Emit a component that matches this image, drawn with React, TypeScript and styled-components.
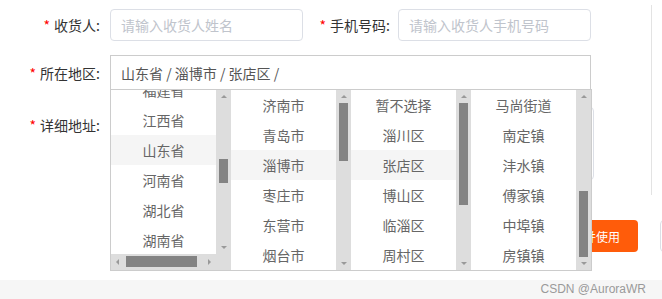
import React from "react";
import styled, { createGlobalStyle } from "styled-components";

const GlobalStyle = createGlobalStyle`
  html, body {
    margin: 0;
    padding: 0;
    background: #fff;
  }
  body {
    font-family: "Noto Sans CJK SC", "Noto Sans", sans-serif;
    font-size: 14px;
    color: #333;
  }
`;

const Page = styled.div`
  width: 662px;
  height: 299px;
  overflow: hidden;
  display: flex;
  flex-direction: column;
  background: #fff;
`;

const Main = styled.div`
  flex: 1;
  padding-top: 9px;
`;

const TopSection = styled.div`
  display: flex;
`;

const Fields = styled.div`
  width: 651px;
  flex: none;
`;

const Divider = styled.div`
  flex: none;
  width: 1px;
  height: 190px;
  margin-top: -4px;
  background: #e3e3e3;
`;

const Row = styled.div<{ $top?: number; $start?: boolean }>`
  display: flex;
  align-items: ${({ $start }) => ($start ? "flex-start" : "center")};
  margin-top: ${({ $top }) => $top ?? 0}px;
`;

const Label = styled.label<{ $width: number; $left?: number; $gap: number; $top?: number }>`
  flex: none;
  width: ${({ $width }) => $width}px;
  margin-left: ${({ $left }) => $left ?? 0}px;
  margin-right: ${({ $gap }) => $gap}px;
  margin-top: ${({ $top }) => $top ?? 0}px;
  text-align: right;
  line-height: 20px;
  white-space: nowrap;
  color: #333;
`;

const Req = styled.span`
  color: #f00;
  margin-right: 4px;
`;

const TextInput = styled.input`
  box-sizing: border-box;
  width: 193px;
  height: 32px;
  padding: 0 10px;
  border: 1px solid #dcdfe6;
  border-radius: 4px;
  font: inherit;
  font-size: 14px;
  color: #333;
  outline: none;

  &::placeholder {
    color: #c0c4cc;
  }
`;

const AddressField = styled.div`
  position: relative;
  box-sizing: border-box;
  width: 481px;
  height: 35px;
  padding: 0 10px;
  border: 1px solid #cccccc;
  display: flex;
  align-items: center;
  color: #555;
`;

const Dropdown = styled.div`
  position: absolute;
  top: 100%;
  left: -1px;
  z-index: 10;
  display: flex;
  height: 180px;
  border: 1px solid #cccccc;
  background: #fff;
`;

const Column = styled.div`
  width: 120px;
  display: flex;
  flex-direction: column;
`;

const ColumnBody = styled.div`
  flex: 1;
  min-height: 0;
  display: flex;
`;

const List = styled.ul`
  flex: 1;
  margin: 0;
  padding: 0;
  list-style: none;
  overflow: hidden;
`;

const Item = styled.li<{ $active?: boolean; $shift?: number }>`
  height: 30px;
  margin-top: ${({ $shift }) => $shift ?? 0}px;
  line-height: 30px;
  text-align: center;
  white-space: nowrap;
  color: #666;
  background: ${({ $active }) => ($active ? "#f5f5f5" : "transparent")};
`;

const VTrack = styled.div`
  flex: none;
  width: 15px;
  display: flex;
  flex-direction: column;
  background: #dddddd;
`;

const HTrack = styled.div`
  flex: none;
  height: 16px;
  display: flex;
  background: #dddddd;
`;

const ArrowBox = styled.div`
  flex: none;
  width: 13px;
  height: 13px;
  display: flex;
  align-items: center;
  justify-content: center;
`;

const VArrowBox = styled(ArrowBox)`
  width: auto;
`;

const HArrowBox = styled(ArrowBox)`
  height: auto;
`;

const Triangle = styled.span<{ $dir: "up" | "down" | "left" | "right" }>`
  width: 0;
  height: 0;
  border-style: solid;
  border-color: transparent;
  ${({ $dir }) =>
    $dir === "up"
      ? "border-width: 0 3px 3px 3px; border-bottom-color: #999;"
      : $dir === "down"
      ? "border-width: 3px 3px 0 3px; border-top-color: #999;"
      : $dir === "left"
      ? "border-width: 3px 3px 3px 0; border-right-color: #999;"
      : "border-width: 3px 0 3px 3px; border-left-color: #999;"}
`;

const Rail = styled.div`
  flex: 1;
  min-width: 0;
  min-height: 0;
  display: flex;
`;

const VRail = styled(Rail)`
  flex-direction: column;
`;

const VThumb = styled.div<{ $offset: number; $size: number }>`
  flex: none;
  margin: ${({ $offset }) => $offset}px 3px 0 3px;
  height: ${({ $size }) => $size}px;
  background: #838383;
`;

const HThumb = styled.div<{ $offset: number; $size: number }>`
  flex: none;
  margin: 2px 0 3px ${({ $offset }) => $offset}px;
  width: ${({ $size }) => $size}px;
  background: #838383;
`;

const Corner = styled.div`
  flex: none;
  width: 15px;
`;

const TextArea = styled.textarea`
  box-sizing: border-box;
  width: 484px;
  height: 73px;
  border: 1px solid #dcdfe6;
  border-radius: 4px;
  resize: none;
  font: inherit;
  outline: none;
`;

const ButtonRow = styled.div`
  display: flex;
  gap: 22px;
  margin-top: 25px;
  padding-left: 542px;
`;

const PrimaryButton = styled.button`
  flex: none;
  height: 32px;
  padding: 0 18px;
  border: none;
  border-radius: 4px;
  background: #ff5c0a;
  color: #fff;
  font: inherit;
  font-size: 12px;
`;

const GhostButton = styled.button`
  flex: none;
  height: 32px;
  padding: 0 18px;
  border: 1px solid #dcdfe6;
  border-radius: 4px;
  background: #fff;
  color: #333;
  font: inherit;
  font-size: 12px;
`;

const Footer = styled.div`
  flex: none;
  height: 19px;
  box-sizing: border-box;
  padding: 2px 16px 0 0;
  background: #f6f6f6;
  text-align: right;
  font-family: "Liberation Sans", Arial, sans-serif;
  font-size: 12px;
  line-height: 14px;
  color: #9a9a9a;
`;

type ColumnData = {
  items: string[];
  active?: string;
  shift?: number;
  thumb: [number, number];
  hThumb?: [number, number];
};

const columns: ColumnData[] = [
  {
    items: ["福建省", "江西省", "山东省", "河南省", "湖北省", "湖南省"],
    active: "山东省",
    shift: -15,
    thumb: [56, 24],
    hThumb: [2, 71],
  },
  {
    items: ["济南市", "青岛市", "淄博市", "枣庄市", "东营市", "烟台市"],
    active: "淄博市",
    thumb: [0, 58],
  },
  {
    items: ["暂不选择", "淄川区", "张店区", "博山区", "临淄区", "周村区"],
    active: "张店区",
    thumb: [0, 102],
  },
  {
    items: ["马尚街道", "南定镇", "沣水镇", "傅家镇", "中埠镇", "房镇镇"],
    thumb: [88, 66],
  },
];

const VScroll = ({ offset, size }: { offset: number; size: number }) => (
  <VTrack>
    <VArrowBox>
      <Triangle $dir="up" />
    </VArrowBox>
    <VRail>
      <VThumb $offset={offset} $size={size} />
    </VRail>
    <VArrowBox>
      <Triangle $dir="down" />
    </VArrowBox>
  </VTrack>
);

const HScroll = ({ offset, size }: { offset: number; size: number }) => (
  <HTrack>
    <HArrowBox>
      <Triangle $dir="left" />
    </HArrowBox>
    <Rail>
      <HThumb $offset={offset} $size={size} />
    </Rail>
    <HArrowBox>
      <Triangle $dir="right" />
    </HArrowBox>
    <Corner />
  </HTrack>
);

const RegionColumn = ({ data }: { data: ColumnData }) => (
  <Column>
    <ColumnBody>
      <List>
        {data.items.map((name, i) => (
          <Item key={name} $active={name === data.active} $shift={i === 0 ? data.shift : 0}>
            {name}
          </Item>
        ))}
      </List>
      <VScroll offset={data.thumb[0]} size={data.thumb[1]} />
    </ColumnBody>
    {data.hThumb ? <HScroll offset={data.hThumb[0]} size={data.hThumb[1]} /> : null}
  </Column>
);

export default function App() {
  return (
    <>
      <GlobalStyle />
      <Page>
        <Main>
          <TopSection>
            <Fields>
              <Row>
                <Label $width={100} $gap={10}>
                  <Req>*</Req>收货人:
                </Label>
                <TextInput placeholder="请输入收货人姓名" />
                <Label $width={80} $left={7} $gap={8}>
                  <Req>*</Req>手机号码:
                </Label>
                <TextInput placeholder="请输入收货人手机号码" />
              </Row>
              <Row $top={14}>
                <Label $width={100} $gap={10}>
                  <Req>*</Req>所在地区:
                </Label>
                <AddressField>
                  山东省 / 淄博市 / 张店区 /
                  <Dropdown>
                    {columns.map((col, i) => (
                      <RegionColumn key={i} data={col} />
                    ))}
                  </Dropdown>
                </AddressField>
              </Row>
              <Row $top={17} $start>
                <Label $width={100} $gap={10} $top={8}>
                  <Req>*</Req>详细地址:
                </Label>
                <TextArea />
              </Row>
            </Fields>
            <Divider />
          </TopSection>
          <ButtonRow>
            <PrimaryButton>保存并使用</PrimaryButton>
            <GhostButton>取消</GhostButton>
          </ButtonRow>
        </Main>
        <Footer>CSDN @AuroraWR</Footer>
      </Page>
    </>
  );
}
